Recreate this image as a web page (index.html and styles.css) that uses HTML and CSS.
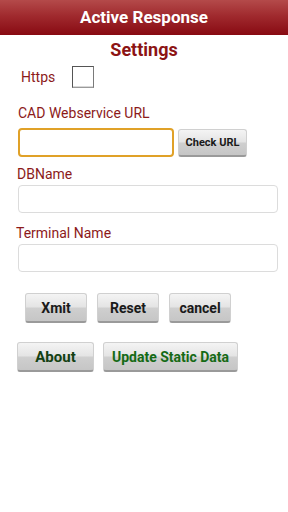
FILE: index.html
```html
<!DOCTYPE html>
<html>
<head>
<meta charset="utf-8">
<link rel="stylesheet" href="styles.css">
</head>
<body>
<div class="header">Active Response</div>
<div class="title">Settings</div>
<div class="https-row">
  <span class="label https-label">Https</span>
  <span class="checkbox"></span>
</div>
<div class="label cad-label">CAD Webservice URL</div>
<div class="url-row">
  <div class="input url-input"></div>
  <div class="btn check-btn">Check URL</div>
</div>
<div class="label db-label">DBName</div>
<div class="input full-input"></div>
<div class="label term-label">Terminal Name</div>
<div class="input full-input"></div>
<div class="btn-row row1">
  <div class="btn act-btn">Xmit</div>
  <div class="btn act-btn">Reset</div>
  <div class="btn act-btn">cancel</div>
</div>
<div class="btn-row row2">
  <div class="btn about-btn">About</div>
  <div class="btn update-btn">Update Static Data</div>
</div>
</body>
</html>
```
FILE: styles.css
```css
html, body {
  margin: 0;
  padding: 0;
  background: #ffffff;
  font-family: Roboto, "Noto Sans", sans-serif;
}
body {
  width: 288px;
  height: 512px;
  overflow: hidden;
}
.header {
  height: 35px;
  background: linear-gradient(#b44a4a 0%, #a02a2e 45%, #880a12 100%);
  color: #ffffff;
  font-weight: bold;
  font-size: 17px;
  line-height: 35px;
  text-align: center;
}
.title {
  margin-top: 4px;
  height: 22px;
  line-height: 22px;
  text-align: center;
  font-weight: bold;
  font-size: 18px;
  color: #8c1414;
}
.label {
  color: #8c1a1a;
  font-size: 14px;
  line-height: 18px;
  height: 18px;
}
.https-row {
  margin-top: 5px;
  height: 22px;
  display: flex;
  align-items: center;
  padding-left: 21px;
}
.https-label {
  width: 51px;
}
.checkbox {
  width: 20px;
  height: 20px;
  border: 1px solid #555555;
  border-bottom-color: #9a9a9a;
  border-right-color: #7a7a7a;
  background: #ffffff;
  box-shadow: inset 0 -1px 0 #d8d8d8;
}
.cad-label {
  margin-top: 16px;
  padding-left: 18px;
}
.url-row {
  margin-top: 6px;
  display: flex;
  align-items: center;
  padding-left: 18px;
  height: 29px;
}
.input {
  box-sizing: border-box;
  background: #ffffff;
  border-radius: 4px;
}
.url-input {
  width: 156px;
  height: 29px;
  border: 2px solid #e0a128;
}
.db-label {
  margin-top: 8px;
  padding-left: 17px;
}
.term-label {
  margin-top: 11px;
  padding-left: 16px;
}
.full-input {
  margin-top: 2px;
  margin-left: 18px;
  width: 260px;
  height: 28px;
  border: 1px solid #dcdcdc;
}
.btn {
  box-sizing: border-box;
  display: flex;
  align-items: center;
  justify-content: center;
  font-weight: bold;
  color: #1a1a1a;
  border-radius: 3px;
  background: linear-gradient(#f4f4f4 0%, #e4e4e4 48%, #cfcfcf 52%, #c6c6c6 100%);
  border: 1px solid #d0d0d0;
  border-bottom: 2px solid #9a9a9a;
}
.check-btn {
  margin-left: 4px;
  width: 69px;
  height: 28px;
  font-size: 11px;
}
.btn-row {
  display: flex;
}
.row1 {
  margin-top: 21px;
  padding-left: 25px;
  gap: 10px;
}
.act-btn {
  width: 62px;
  height: 30px;
  font-size: 14px;
}
.row2 {
  margin-top: 19px;
  padding-left: 17px;
  gap: 9px;
}
.about-btn {
  width: 77px;
  height: 30px;
  font-size: 15px;
  color: #124012;
}
.update-btn {
  width: 135px;
  height: 30px;
  font-size: 14px;
  color: #156a15;
}
```
